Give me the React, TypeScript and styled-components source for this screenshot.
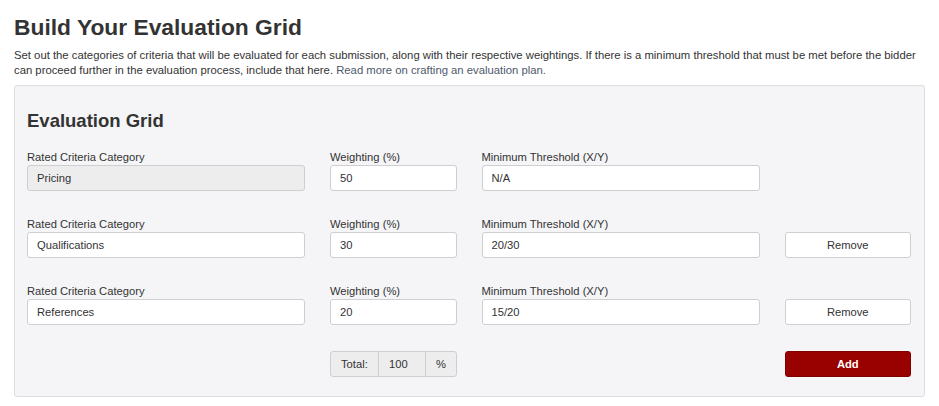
import React from "react";
import styled, { createGlobalStyle } from "styled-components";

const Global = createGlobalStyle`
  html, body { margin: 0; padding: 0; background: #ffffff; }
  body { font-family: "Liberation Sans", Arial, Helvetica, sans-serif; color: #333333; }
  * { box-sizing: border-box; }
`;

const Page = styled.div`
  padding: 14px 14px 0 14px;
`;

const Title = styled.h1`
  margin: 0;
  font-size: 22.8px;
  line-height: 26px;
  font-weight: 700;
  color: #333333;
`;

const Intro = styled.p`
  margin: 8px 0 7px 0;
  font-size: 11.3px;
  line-height: 15px;
  color: #333333;
`;

const Link = styled.a`
  color: #4d596b;
  text-decoration: none;
`;

const Panel = styled.section`
  background: #f5f5f7;
  border: 1px solid #dedee2;
  border-radius: 3px;
  padding: 24px 13px 19px 12px;
`;

const PanelTitle = styled.h2`
  margin: 0 0 18px 0;
  font-size: 18.5px;
  line-height: 22px;
  font-weight: 700;
  color: #333333;
`;

const Rows = styled.div`
  display: flex;
  flex-direction: column;
  gap: 26px;
`;

const Row = styled.div`
  display: grid;
  grid-template-columns: repeat(12, 1fr);
  column-gap: 25px;
  align-items: end;
`;

const Field = styled.div<{ $span: number }>`
  grid-column: span ${(p) => p.$span};
  display: flex;
  flex-direction: column;
`;

const Label = styled.label`
  font-size: 11.2px;
  line-height: 15px;
  color: #333333;
`;

const Input = styled.input`
  height: 26px;
  width: 100%;
  padding: 0 9px;
  font-family: inherit;
  font-size: 11.2px;
  color: #333333;
  background: ${(p) => (p.disabled ? "#ededee" : "#ffffff")};
  border: 1px solid #cfcfd2;
  border-radius: 3px;
  outline: none;
`;

const Button = styled.button<{ $primary?: boolean }>`
  height: 26px;
  width: 100%;
  font-family: inherit;
  font-size: 11.2px;
  font-weight: ${(p) => (p.$primary ? 700 : 400)};
  color: ${(p) => (p.$primary ? "#ffffff" : "#333333")};
  background: ${(p) => (p.$primary ? "#990000" : "#ffffff")};
  border: 1px solid ${(p) => (p.$primary ? "#7d0000" : "#cfcfd2")};
  border-radius: 3px;
  cursor: pointer;
`;

const Group = styled.div`
  display: flex;
  height: 26px;
  border: 1px solid #cfcfd2;
  border-radius: 3px;
  background: #ededee;
  overflow: hidden;
`;

const Cell = styled.div<{ $width?: number; $center?: boolean; $grow?: boolean }>`
  display: flex;
  align-items: center;
  justify-content: ${(p) => (p.$center ? "center" : "flex-start")};
  padding: 0 10px;
  font-size: 11.2px;
  color: #333333;
  ${(p) => (p.$width ? `width: ${p.$width}px; flex: none;` : "")}
  ${(p) => (p.$grow ? "flex: 1;" : "")}
  & + & {
    border-left: 1px solid #cfcfd2;
  }
`;

type Criterion = { name: string; weight: string; threshold: string; fixed?: boolean };

const criteria: Criterion[] = [
  { name: "Pricing", weight: "50", threshold: "N/A", fixed: true },
  { name: "Qualifications", weight: "30", threshold: "20/30" },
  { name: "References", weight: "20", threshold: "15/20" },
];

export default function App() {
  return (
    <>
      <Global />
      <Page>
        <Title>Build Your Evaluation Grid</Title>
        <Intro>
          Set out the categories of criteria that will be evaluated for each submission, along with
          their respective weightings. If there is a minimum threshold that must be met before the
          bidder can proceed further in the evaluation process, include that here.{" "}
          <Link href="#">Read more on crafting an evaluation plan.</Link>
        </Intro>
        <Panel>
          <PanelTitle>Evaluation Grid</PanelTitle>
          <Rows>
            {criteria.map((c) => (
              <Row key={c.name}>
                <Field $span={4}>
                  <Label>Rated Criteria Category</Label>
                  <Input defaultValue={c.name} disabled={c.fixed} />
                </Field>
                <Field $span={2}>
                  <Label>Weighting (%)</Label>
                  <Input defaultValue={c.weight} />
                </Field>
                <Field $span={4}>
                  <Label>Minimum Threshold (X/Y)</Label>
                  <Input defaultValue={c.threshold} />
                </Field>
                <Field $span={2}>{!c.fixed && <Button>Remove</Button>}</Field>
              </Row>
            ))}
            <Row>
              <Field $span={4} />
              <Field $span={2}>
                <Group>
                  <Cell $width={47}>Total:</Cell>
                  <Cell $width={47}>100</Cell>
                  <Cell $grow $center>%</Cell>
                </Group>
              </Field>
              <Field $span={4} />
              <Field $span={2}>
                <Button $primary>Add</Button>
              </Field>
            </Row>
          </Rows>
        </Panel>
      </Page>
    </>
  );
}
